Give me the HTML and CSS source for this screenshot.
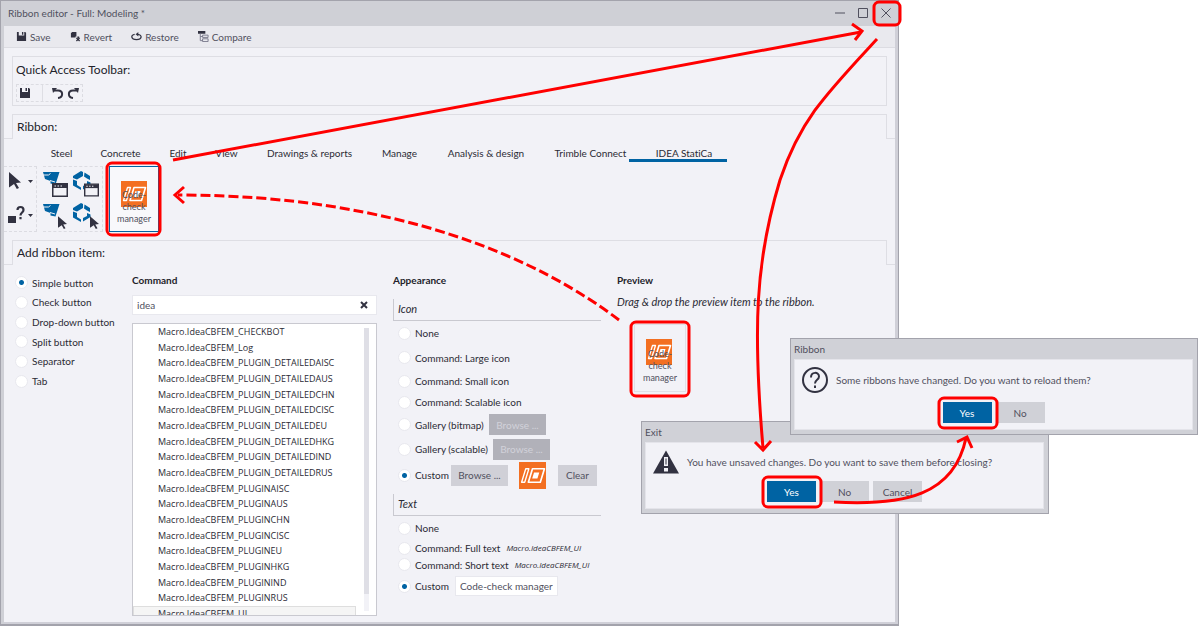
FILE: index.html
```html
<!DOCTYPE html>
<html lang="en">
<head>
<meta charset="utf-8">
<title>Ribbon editor - Full: Modeling</title>
<link rel="stylesheet" href="styles.css">
</head>
<body>
<svg class="defs" aria-hidden="true">
  <symbol id="save" viewBox="0 0 12 12"><path fill="currentColor" d="M1 1h2v4h6V1h1l1 1v9H1zM6.500 1h1.500v3H6.500z"/></symbol>
  <symbol id="logo" viewBox="0 0 26 26"><path fill="#f36f21" d="M0 0h26v26H0z"/><path fill="none" stroke="#fff" stroke-width="1.300" stroke-linejoin="round" d="M6.500 6.500h3L5.500 19.500H2.500z"/><path fill="none" stroke="#fff" stroke-width="1.600" stroke-linejoin="round" d="M13 6.500h11.500l-4 13H9z"/><path fill="#fff" d="M14.500 10h5l-1.800 6h-5z"/></symbol>
  <symbol id="pointer" viewBox="0 0 12 17"><path fill="currentColor" d="M0 0l12 10.500-5 .5 3 5-2.200 1L5 12l-5 3.500z"/></symbol>
  <symbol id="beam" viewBox="0 0 17 14"><path fill="#0063a3" d="M0 1h16.500L12.500 13.500 7.500 12.500V10L2 8z"/><path fill="none" stroke="#f2f2f7" stroke-width="1" d="M0 4h5.500l2-1.500M7 9.500l5 1.500"/></symbol>
  <symbol id="hex" viewBox="0 0 18 19"><path fill="#0063a3" d="M8 0l2 1v4L4 8.500 0 7V5zM0 8.500l4 1.500v4l4 2.500V19L0 14.500zM11.500 1.500L17 5v4l-3-1.500-3-2zM14 10l3.500 1.500V14L10 18.500V15l4-2z"/></symbol>
  <symbol id="window" viewBox="0 0 16 14"><path fill="#f2f2f7" stroke="currentColor" stroke-width="1.500" d="M.75.75h14.500v12.500H.75z"/><path fill="currentColor" d="M1 1h14v4H1z"/><path stroke="#f2f2f7" stroke-width="1.200" d="M2.500 3H4M5.500 3H7M8.500 3H10"/></symbol>
</svg>

<main class="canvas">
  <section class="app" aria-label="Ribbon editor">
    <header class="titlebar">
      <h1>Ribbon editor - Full: Modeling *</h1>
      <div class="window-buttons">
        <button aria-label="Minimize"><svg viewBox="0 0 10 10"><path d="M0 5h10"/></svg></button>
        <button aria-label="Maximize"><svg viewBox="0 0 10 10"><path d="M.5.5h9v9h-9z"/></svg></button>
        <button aria-label="Close"><svg viewBox="0 0 10 10"><path d="M.5.5l9 9M9.500.5l-9 9"/></svg></button>
      </div>
    </header>
    <nav class="commands">
      <button><svg><use href="#save"/></svg>Save</button>
      <button><svg viewBox="0 0 12 12"><path fill="currentColor" d="M1 2h1V1h5v5H6v1H1zM8 6h2v2H8z"/><path fill="none" stroke="currentColor" stroke-width="1.500" d="M7 7.500l3.500 3.500M10.500 7.500L7 11"/></svg>Revert</button>
      <button><svg viewBox="0 0 12 12"><path fill="none" stroke="currentColor" stroke-width="1.400" d="M4 3.700C-.5 4.200-.3 9.300 6 9.300s6.500-5.100 1.500-5.600"/><path fill="currentColor" d="M8 1v5L5 3.500z"/></svg>Restore</button>
      <button><svg viewBox="0 0 12 12"><path fill="currentColor" d="M0 0h8v3H0z"/><path fill="none" stroke="#77778a" d="M2.500 3v7.500H5M2.500 6H5M5 4.500h6v2.500H5zM5 8.500h6v3H5z"/></svg>Compare</button>
    </nav>

    <section class="quick">
      <h2>Quick Access Toolbar:</h2>
      <div class="quick-items">
        <button aria-label="Save"><svg><use href="#save"/></svg></button>
        <button aria-label="Undo"><svg viewBox="0 0 12 12"><path fill="none" stroke="currentColor" stroke-width="2" d="M2 3.500h4c5.500 0 5.500 7 0 7.500"/><path fill="currentColor" d="M0 1l5 0-4 5z"/></svg></button>
        <button aria-label="Redo"><svg viewBox="0 0 12 12"><path fill="none" stroke="currentColor" stroke-width="2" d="M10 3.500H6C.5 3.500.5 10.500 6 11"/><path fill="currentColor" d="M12 1H7l4 5z"/></svg></button>
      </div>
    </section>

    <section class="ribbon">
      <div class="section-head"><h2>Ribbon:</h2></div>
      <nav class="tabs">
        <a href="#steel">Steel</a><a href="#concrete">Concrete</a><a href="#edit">Edit</a><a href="#view">View</a><a href="#drawings">Drawings &amp; reports</a><a href="#manage">Manage</a><a href="#analysis">Analysis &amp; design</a><a href="#connect">Trimble Connect</a><a href="#idea" class="active" aria-current="page">IDEA StatiCa</a>
      </nav>
      <div class="ribbon-items">
        <div class="group select-group">
          <button aria-label="Select"><svg viewBox="0 0 28 24"><g transform="translate(2 1)"><path fill="currentColor" d="M0 0l12 10.500-5 .5 3 5-2.200 1L5 12l-5 3.500z"/></g><path fill="currentColor" d="M21 9h5l-2.500 3z"/></svg></button>
          <button aria-label="Inquire"><svg viewBox="0 0 28 24"><path fill="currentColor" d="M1 13h8v7H1zM21 11h5l-2.500 3z"/><path fill="none" stroke="currentColor" stroke-width="2.200" d="M10.500 7c0-4 6-4 6 0 0 2.500-3 2.500-3 5.500M13.500 14v2.200"/></svg></button>
        </div>
        <div class="group model-group">
          <button aria-label="Beam settings"><svg viewBox="0 0 26 28"><use href="#beam" width="17" height="14"/><use href="#window" x="9" y="12" width="16" height="14"/></svg></button>
          <button aria-label="Assembly settings"><svg viewBox="0 0 26 28"><use href="#hex" width="18" height="19"/><use href="#window" x="11" y="12" width="15" height="14"/></svg></button>
          <button aria-label="Pick beam"><svg viewBox="0 0 26 28"><use href="#beam" width="17" height="14"/><use href="#pointer" x="15" y="13" width="9" height="13"/></svg></button>
          <button aria-label="Pick assembly"><svg viewBox="0 0 26 28"><use href="#hex" width="18" height="19"/><use href="#pointer" x="17" y="13" width="9" height="13"/></svg></button>
        </div>
        <button class="tile selected"><svg><use href="#logo"/></svg><span>Code-check manager</span></button>
      </div>
    </section>

    <section class="add">
      <div class="section-head"><h2>Add ribbon item:</h2></div>
      <div class="columns">
        <fieldset class="kinds" aria-label="Item type">
          <label><input type="radio" name="kind" checked>Simple button</label>
          <label><input type="radio" name="kind">Check button</label>
          <label><input type="radio" name="kind">Drop-down button</label>
          <label><input type="radio" name="kind">Split button</label>
          <label><input type="radio" name="kind">Separator</label>
          <label><input type="radio" name="kind">Tab</label>
        </fieldset>

        <div class="command">
          <h3>Command</h3>
          <div class="search">
            <input type="text" value="idea" aria-label="Search commands">
            <button aria-label="Clear search"><svg viewBox="0 0 8 8"><path d="M1 1l6 6M7 1L1 7"/></svg></button>
          </div>
          <div class="list">
            <ul>
              <li>Macro.IdeaCBFEM_CHECKBOT</li><li>Macro.IdeaCBFEM_Log</li>
              <li>Macro.IdeaCBFEM_PLUGIN_DETAILEDAISC</li><li>Macro.IdeaCBFEM_PLUGIN_DETAILEDAUS</li>
              <li>Macro.IdeaCBFEM_PLUGIN_DETAILEDCHN</li><li>Macro.IdeaCBFEM_PLUGIN_DETAILEDCISC</li>
              <li>Macro.IdeaCBFEM_PLUGIN_DETAILEDEU</li><li>Macro.IdeaCBFEM_PLUGIN_DETAILEDHKG</li>
              <li>Macro.IdeaCBFEM_PLUGIN_DETAILEDIND</li><li>Macro.IdeaCBFEM_PLUGIN_DETAILEDRUS</li>
              <li>Macro.IdeaCBFEM_PLUGINAISC</li><li>Macro.IdeaCBFEM_PLUGINAUS</li>
              <li>Macro.IdeaCBFEM_PLUGINCHN</li><li>Macro.IdeaCBFEM_PLUGINCISC</li>
              <li>Macro.IdeaCBFEM_PLUGINEU</li><li>Macro.IdeaCBFEM_PLUGINHKG</li>
              <li>Macro.IdeaCBFEM_PLUGININD</li><li>Macro.IdeaCBFEM_PLUGINRUS</li>
              <li class="current">Macro.IdeaCBFEM_UI</li>
            </ul>
            <div class="scrollbar"><div></div></div>
          </div>
        </div>

        <div class="appearance">
          <h3>Appearance</h3>
          <h4>Icon</h4>
          <div class="icon-options">
            <div><label><input type="radio" name="icon">None</label></div>
            <div><label><input type="radio" name="icon">Command: Large icon</label></div>
            <div><label><input type="radio" name="icon">Command: Small icon</label></div>
            <div><label><input type="radio" name="icon">Command: Scalable icon</label></div>
            <div><label class="bitmap"><input type="radio" name="icon">Gallery (bitmap)</label><button class="button" disabled>Browse ...</button></div>
            <div><label class="scalable"><input type="radio" name="icon">Gallery (scalable)</label><button class="button" disabled>Browse ...</button></div>
            <div><label class="custom"><input type="radio" name="icon" checked>Custom</label><button class="button">Browse ...</button><svg class="chosen"><use href="#logo"/></svg><button class="button clear">Clear</button></div>
          </div>
          <h4>Text</h4>
          <div class="text-options">
            <div><label><input type="radio" name="text">None</label></div>
            <div><label><input type="radio" name="text">Command: Full text</label><em>Macro.IdeaCBFEM_UI</em></div>
            <div><label><input type="radio" name="text">Command: Short text</label><em>Macro.IdeaCBFEM_UI</em></div>
            <div><label class="custom"><input type="radio" name="text" checked>Custom</label><input class="caption" type="text" value="Code-check manager" aria-label="Custom text"></div>
          </div>
        </div>

        <div class="preview">
          <h3>Preview</h3>
          <p>Drag &amp; drop the preview item to the ribbon.</p>
          <button class="tile"><svg><use href="#logo"/></svg><span>Code-check manager</span></button>
        </div>
      </div>
    </section>
  </section>

  <section class="dialog exit" role="dialog" aria-labelledby="exit-title">
    <h2 id="exit-title">Exit</h2>
    <div class="dialog-body">
      <div class="message">
        <svg viewBox="0 0 26 26"><path fill="currentColor" d="M13 1.500L26 24.500H0z"/><path fill="#f2f2f7" d="M11 8h4v9h-4zM11 19h4v3.500h-4z"/><path fill="currentColor" d="M12.500 9.500h1v6h-1z"/></svg>
        <p>You have unsaved changes. Do you want to save them before closing?</p>
      </div>
      <div class="actions"><button class="primary">Yes</button><button>No</button><button>Cancel</button></div>
    </div>
  </section>

  <section class="dialog reload" role="dialog" aria-labelledby="reload-title">
    <h2 id="reload-title">Ribbon</h2>
    <div class="dialog-body">
      <div class="message">
        <svg viewBox="0 0 26 26"><g fill="none" stroke="currentColor" stroke-width="2"><circle cx="13" cy="13" r="12"/><path d="M9 10.500c0-6 8-6 8-1 0 3.500-4 3-4 7M13 18.500V21"/></g></svg>
        <p>Some ribbons have changed. Do you want to reload them?</p>
      </div>
      <div class="actions"><button class="primary">Yes</button><button>No</button></div>
    </div>
  </section>

  <svg class="annotations" width="1200" height="628" viewBox="0 0 1200 628" aria-hidden="true">
    <g fill="none" stroke="#f00" stroke-width="3">
      <rect x="874" y="2" width="26" height="23" rx="5"/>
      <rect x="107" y="163" width="53" height="72" rx="5"/>
      <rect x="631" y="322" width="58" height="74" rx="5"/>
      <rect x="763" y="477" width="58" height="30" rx="5"/>
      <rect x="939" y="398" width="58" height="30" rx="5"/>
      <path d="M173 160L861 32M852 24l10 7-7 9"/>
      <path d="M877 39C826 94 800 120 780 180C755 262 753 330 763 448M755 442l8 8 8-9"/>
      <path stroke-dasharray="10 4" d="M619 320C540 260 400 195 178 195"/>
      <path d="M184 187l-9 8 9 8"/>
      <path d="M834 502C905 506 954 495 966 438M957 442l10-5 5 11"/>
    </g>
  </svg>
</main>
</body>
</html>
```
FILE: styles.css
```css
* { box-sizing: border-box; }
body { margin: 0; background: #fff; color: #2b2b35; font: 10px/14px Lato, "Open Sans", sans-serif; font-variant-ligatures: none; }
h1, h2, h3, h4, p, ul, fieldset { margin: 0; padding: 0; border: 0; font-weight: 400; font-size: 10px; }
ul { list-style: none; }
button, input { font: inherit; color: inherit; margin: 0; padding: 0; border: 0; background: none; border-radius: 0; }
a { color: inherit; text-decoration: none; }
svg { display: block; flex: none; }
.defs { position: absolute; width: 0; height: 0; }
.canvas { position: relative; min-height: 628px; }
.annotations { position: absolute; left: 0; top: 0; pointer-events: none; }

.app { width: calc(75% - 1px); min-height: 626px; background: #f2f2f7; border: 1px solid #a3a3ac; border-width: 1px 1px 2px 1px; box-shadow: inset 3px 0 #cfd0d6, inset -3px -2px #d0d0d8; padding: 0 3px 3px; }
.titlebar { display: flex; align-items: center; justify-content: space-between; height: 25px; margin: 0 -3px; padding: 0 7px 1px; background: #cfd0d6; }
.titlebar h1 { color: #50505e; }
.window-buttons { display: flex; gap: 13px; }
.window-buttons button, .window-buttons svg { width: 10px; height: 10px; overflow: visible; }
.window-buttons path { fill: none; stroke: #50505e; }
.commands { display: flex; gap: 19px; height: 22px; padding: 0 12px; align-items: center; background: #e9e9ee; border-bottom: 1px solid #dcdce2; color: #50505e; }
.commands button { display: flex; align-items: center; gap: 3px; }
.commands svg { width: 11px; height: 11px; color: #323241; }
h2 { font-size: 12px; line-height: 16px; color: #22222a; }

.quick { height: 50px; margin: 8px; padding: 5px 3px; border: 1px solid #dedee4; }
.quick-items { display: flex; width: 67px; height: 18px; margin-top: 6px; padding: 0 2px; gap: 3px; border: 1px dashed #dcdce2; }
.quick-items button { display: flex; align-items: center; color: #323241; }
.quick-items button:first-child { width: 24px; border-right: 1px solid #dedee4; margin-right: 6px; }
.quick-items svg { width: 12px; height: 12px; }

.section-head { display: flex; height: 25px; }
.section-head::before, .section-head::after { content: ""; width: 8px; border-bottom: 1px solid #dedee4; }
.section-head h2 { flex: 1; padding: 4px; border: 1px solid #dedee4; border-bottom: 0; }

.tabs { display: grid; grid-template-columns: 49px 69px 46px 51px 115px 65px 108px 101px 86px; margin: 7px 0 0 33px; text-align: center; }
.tabs a { position: relative; height: 16px; }
.tabs .active::after { content: ""; position: absolute; left: -12px; right: 0; bottom: 0; height: 3px; background: #0063a3; }
.ribbon-items { display: flex; gap: 6px; margin-top: 4px; height: 66px; color: #323241; }
.group { display: grid; align-content: start; border: 1px dashed #dcdce2; border-width: 1px 0; }
.select-group { width: 33px; border-right-width: 1px; grid-auto-rows: 32px; align-items: center; padding-left: 3px; }
.select-group svg { width: 28px; height: 24px; }
.model-group { width: 60px; grid-template-columns: 30px 30px; grid-auto-rows: 32px; border-right-width: 1px; }
.model-group svg { width: 26px; height: 28px; margin-top: 3px; }

.tile { position: relative; width: 50px; height: 66px; display: flex; align-items: flex-end; justify-content: center; padding: 0 2px 6px; font-size: 9px; line-height: 12px; text-align: center; color: #50505e; border: 1px solid #e0e0e6; }
.tile.selected { border: 1px solid #0063a3; background: #f8f8fb; }
.tile svg { position: absolute; left: 11px; top: 14px; width: 26px; height: 26px; }
.tile span { position: relative; }

.add { margin-top: 8px; }
.columns { display: grid; grid-template-columns: 101px 245px 208px 1fr; column-gap: 16px; padding: 7px 8px 0 11px; align-items: start; }
h3 { font-weight: 700; color: #22222a; line-height: 16px; }
label { display: flex; align-items: center; gap: 4px; white-space: nowrap; }
input[type="radio"] { appearance: none; width: 13px; height: 13px; border: 1px solid #e8e8ee; border-radius: 50%; background: #fff; flex: none; }
input[type="radio"]:checked { background: radial-gradient(circle, #0063a3 2px, #fff 3px); }
.kinds { display: grid; height: 118px; grid-auto-rows: 1fr; margin-top: 1px; }

.search { display: flex; align-items: center; height: 20px; margin-top: 7px; padding: 0 8px 0 4px; background: #fff; border: 1px solid #e8e8ee; }
.search input { flex: 1; min-width: 0; color: #50505e; }
.search svg { width: 8px; height: 8px; }
.search path { stroke: #323241; stroke-width: 2; }
.list { display: flex; height: 293px; margin-top: 8px; padding-bottom: 1px; border: 1px solid #c9c9d0; background: #fff; overflow: hidden; }
.list ul { display: grid; grid-auto-rows: 1fr; height: 298px; width: 223px; font-family: "Open Sans", "Noto Sans", sans-serif; font-size: 9px; }
.list li { padding: 1px 0 0 25px; }
.list .current { border: 1px solid #dedede; background: #f5f5f5; padding: 0 0 0 24px; }
.scrollbar { width: 5px; margin: 4px 0 3px 8px; background: #f2f2f7; }
.scrollbar div { height: 94%; background: #dfdfe6; }

h4 { height: 22px; padding: 3px 4px; font-style: italic; border: 1px solid #c9c9d0; border-width: 0 0 1px 1px; }
.appearance h3 + h4 { margin-top: 11px; }
.icon-options, .text-options { display: grid; padding-left: 5px; }
.icon-options { grid-template-rows: 24px 25px 22px 20px 25px 24px 28px; margin-bottom: 5px; }
.text-options { grid-template-rows: 24px 16px 17px 26px; }
.icon-options > div, .text-options > div { display: flex; align-items: center; }
.bitmap { width: 91px; }
.scalable { width: 95px; }
.custom { width: 53px; }
.button { width: 57px; height: 21px; background: #d0d0d7; color: #50505e; white-space: nowrap; }
.button:disabled { background: #b1b1b9; color: #d2d2d9; }
.clear { width: 39px; }
.chosen { width: 27px; height: 27px; margin: 0 12px 0 11px; }
em { font: italic 8px/14px "Open Sans", "Noto Sans", sans-serif; margin-left: 6px; }
.caption { width: 103px; height: 20px; margin-left: 4px; padding: 0 4px; background: #fff; border: 1px solid #e8e8ee; color: #50505e; }

h4, .preview p { font-size: 11px; }
.preview p { margin-top: 7px; font-style: italic; white-space: nowrap; }
.preview .tile { width: 52px; height: 68px; margin: 15px 0 0 17px; padding-bottom: 7px; }

.dialog { position: absolute; width: 408px; padding: 0 4px 4px 3px; background: #d0d1d7; border: 1px solid #a3a3ac; color: #50505e; }
.dialog h2 { font-size: 10px; line-height: 20px; height: 20px; color: #50505e; }
.dialog-body { border: 1px solid #e4e4ea; background: #f2f2f7; padding: 7px; display: grid; justify-items: center; }
.message { display: flex; align-items: center; gap: 8px; justify-self: start; }
.message svg { width: 26px; height: 26px; color: #323241; }
.actions { display: flex; gap: 4px; }
.actions button { width: 49px; height: 21px; background: #d0d1d7; }
.actions .primary { background: #0063a3; color: #fff; }
.exit { left: 641px; top: 421px; }
.exit .dialog-body { padding: 6px 7px; row-gap: 6px; }
.reload { left: 790px; top: 338px; }
.reload .dialog-body { padding-bottom: 6px; row-gap: 9px; }
```
